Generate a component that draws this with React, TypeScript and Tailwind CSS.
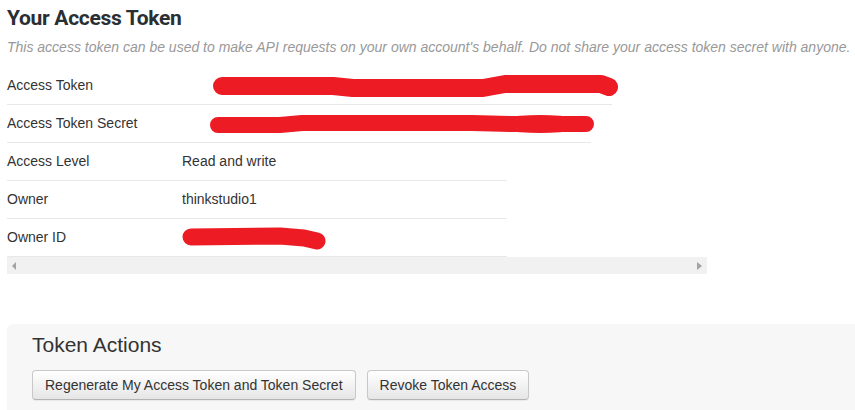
import React from 'react';

const Scribble: React.FC<{ d: string; w: number; h: number; width?: number; extra?: React.ReactNode }> = ({ d, w, h, width = 13, extra }) => (
    <svg width={w} height={h} className="absolute left-0 top-0 overflow-visible" viewBox={`0 0 ${w} ${h}`}>
        <path d={d} fill="none" stroke="#ed1c24" strokeWidth={width} strokeLinecap="round" strokeLinejoin="round" />
        {extra}
    </svg>
);

const Row: React.FC<{ label: string; labelW: string; rowW: string; children?: React.ReactNode }> = ({ label, labelW, rowW, children }) => (
    <div className={`flex items-center h-[38px] border-b border-[#e8e8e8] ${rowW}`}>
        <div className={`shrink-0 ${labelW}`}>{label}</div>
        <div className="relative h-full flex-1 flex items-center">{children}</div>
    </div>
);

const GradButton: React.FC<{ children: React.ReactNode }> = ({ children }) => (
    <button className="h-[30px] px-[12px] text-[14px] text-[#333] rounded-[4px] border border-[#c8c8c8] border-b-[#b3b3b3] bg-gradient-to-b from-white to-[#e6e6e6] shadow-[0_1px_1px_rgba(0,0,0,0.06)]">
        {children}
    </button>
);

export default function App() {
    return (
        <div className="min-h-[410px] bg-white text-[#333] text-[14px] pt-[5px]" style={{ fontFamily: '"Liberation Sans", Arial, sans-serif' }}>
            <h1 className="pl-[7px] text-[21px] leading-[26px] font-bold text-[#292f33] tracking-[-0.3px]" style={{ fontFamily: 'Roboto, "Liberation Sans", sans-serif' }}>
                Your Access Token
            </h1>
            <p className="pl-[7px] mt-[7px] italic leading-[18px] text-[#999] whitespace-nowrap">
                This access token can be used to make API requests on your own account's behalf. Do not share your access token secret with anyone.
            </p>

            {/* Token details */}
            <div className="ml-[7px] mt-[11px] w-[700px]">
                <Row label="Access Token" labelW="w-[206px]" rowW="w-[605px]">
                    <Scribble
                        w={410}
                        h={38}
                        width={18}
                        d="M9 19 L120 19 L140 21 L270 21 L292 17 L388 17 L396 20"
                        extra={<path d="M130 24 L210 25" stroke="#ed1c24" strokeWidth="10" strokeLinecap="round" />}
                    />
                </Row>
                <Row label="Access Token Secret" labelW="w-[203px]" rowW="w-[584px]">
                    <Scribble
                        w={390}
                        h={38}
                        width={16}
                        d="M8 20 L70 20 L92 18 L262 18 L300 19 L376 19"
                        extra={<ellipse cx="330" cy="19" rx="52" ry="9" fill="#ed1c24" />}
                    />
                </Row>
                <Row label="Access Level" labelW="w-[175px]" rowW="w-[500px]">
                    Read and write
                </Row>
                <Row label="Owner" labelW="w-[175px]" rowW="w-[500px]">
                    thinkstudio1
                </Row>
                <Row label="Owner ID" labelW="w-[175px]" rowW="w-[500px]">
                    <Scribble w={150} h={38} width={17} d="M9 18 L98 17 L122 19 L135 22" />
                </Row>

                {/* horizontal scrollbar */}
                <div className="h-[17px] bg-[#f1f1f1] flex items-center justify-between px-[5px]">
                    <svg width="5" height="8" viewBox="0 0 5 8"><path d="M4 0 L0 4 L4 8 Z" fill="#a3a3a3" /></svg>
                    <svg width="5" height="8" viewBox="0 0 5 8"><path d="M0 0 L5 4 L0 8 Z" fill="#a3a3a3" /></svg>
                </div>
            </div>

            {/* Token actions */}
            <div className="ml-[7px] mt-[50px] bg-[#f7f7f7] rounded-tl-[6px] pl-[25px] pt-[9px] pb-[12px]">
                <h2 className="text-[21px] leading-[24px] text-[#333]">Token Actions</h2>
                <div className="flex gap-[11px] mt-[13px]">
                    <GradButton>Regenerate My Access Token and Token Secret</GradButton>
                    <GradButton>Revoke Token Access</GradButton>
                </div>
            </div>
        </div>
    );
}
